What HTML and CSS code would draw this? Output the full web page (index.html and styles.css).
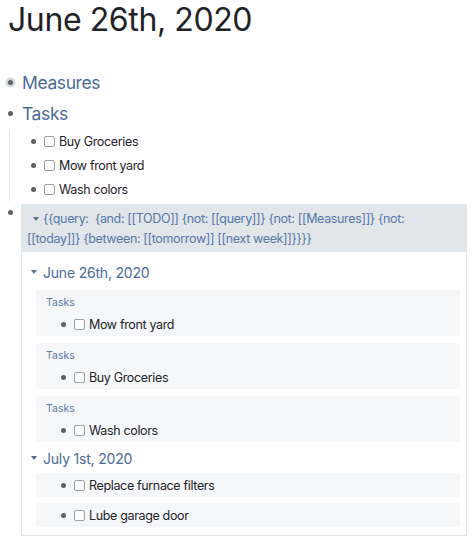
FILE: index.html
```html
<!DOCTYPE html>
<html>
<head>
<meta charset="utf-8">
<link rel="stylesheet" href="styles.css">
</head>
<body>
<h1 class="title">June 26th, 2020</h1>

<div class="block">
  <div class="row top">
    <span class="bcol"><span class="bullet collapsed"></span></span>
    <span class="link big">Measures</span>
  </div>
</div>

<div class="block">
  <div class="row top">
    <span class="bcol"><span class="bullet"></span></span>
    <span class="link big">Tasks</span>
  </div>
  <div class="children">
    <div class="row child"><span class="bcol small"><span class="bullet"></span></span><span class="cb"></span><span class="txt">Buy Groceries</span></div>
    <div class="row child"><span class="bcol small"><span class="bullet"></span></span><span class="cb"></span><span class="txt">Mow front yard</span></div>
    <div class="row child"><span class="bcol small"><span class="bullet"></span></span><span class="cb"></span><span class="txt">Wash colors</span></div>
  </div>
</div>

<div class="qblock">
  <span class="bcol qb"><span class="bullet"></span></span>
  <div class="query">
    <div class="qhead"><span class="tri"></span>{{query:&nbsp; {and: [[TODO]] {not: [[query]]} {not: [[Measures]]} {not: [[today]]} {between: [[tomorrow]] [[next week]]}}}}</div>
    <div class="results">
      <div class="group-head"><span class="tri"></span><span class="link mid">June 26th, 2020</span></div>
      <div class="card">
        <div class="label">Tasks</div>
        <div class="row crow"><span class="bcol small"><span class="bullet"></span></span><span class="cb"></span><span class="txt">Mow front yard</span></div>
      </div>
      <div class="card">
        <div class="label">Tasks</div>
        <div class="row crow"><span class="bcol small"><span class="bullet"></span></span><span class="cb"></span><span class="txt">Buy Groceries</span></div>
      </div>
      <div class="card">
        <div class="label">Tasks</div>
        <div class="row crow"><span class="bcol small"><span class="bullet"></span></span><span class="cb"></span><span class="txt">Wash colors</span></div>
      </div>
      <div class="group-head second"><span class="tri"></span><span class="link mid">July 1st, 2020</span></div>
      <div class="card single">
        <div class="row crow"><span class="bcol small"><span class="bullet"></span></span><span class="cb"></span><span class="txt">Replace furnace filters</span></div>
      </div>
      <div class="card single">
        <div class="row crow"><span class="bcol small"><span class="bullet"></span></span><span class="cb"></span><span class="txt">Lube garage door</span></div>
      </div>
    </div>
  </div>
</div>
</body>
</html>
```

FILE: styles.css
```css
html, body {
  margin: 0;
  padding: 0;
  background: #ffffff;
}
body {
  font-family: Inter, "Noto Sans", sans-serif;
  color: #202b33;
  width: 474px;
  overflow: hidden;
}
.title {
  margin: 0 0 27px 8px;
  font-size: 32px;
  line-height: 40px;
  font-weight: 400;
  color: #1f2328;
  letter-spacing: -0.4px;
}
.row {
  display: flex;
  align-items: center;
}
.bcol {
  display: flex;
  align-items: center;
  justify-content: center;
  width: 12px;
  flex: none;
}
.bcol.small {
  width: 10px;
}
.bullet {
  width: 5px;
  height: 5px;
  border-radius: 50%;
  background: #5c6166;
}
.bullet.collapsed {
  box-shadow: 0 0 0 2.5px #d3d9df;
}
.row.top {
  height: 31px;
  padding-left: 4px;
}
.link {
  color: #4a6a99;
}
.big {
  font-size: 17.5px;
  letter-spacing: -0.4px;
  margin-left: 6px;
}
.mid {
  font-size: 14px;
  letter-spacing: -0.2px;
}
.children {
  margin-left: 9px;
  border-left: 1px solid #e1e4e8;
  padding-left: 18px;
  padding-bottom: 0;
}
.row.child {
  height: 24px;
  font-size: 12.5px;
  letter-spacing: -0.35px;
}
.cb {
  width: 9px;
  height: 9px;
  border: 1px solid #9aa0a6;
  border-radius: 2px;
  margin-left: 6px;
  margin-right: 4px;
  flex: none;
  background: #fff;
}
.txt {
  color: #1f2328;
}
.qblock {
  display: flex;
  align-items: flex-start;
  margin-top: 3px;
  padding-left: 4px;
}
.bcol.qb {
  height: 16px;
  margin-right: 5px;
}
.query {
  width: 446px;
}
.qhead {
  background: #e1e6eb;
  color: #5677a8;
  font-size: 12.5px;
  letter-spacing: -0.35px;
  line-height: 20px;
  padding: 5px 8px 3px 6px;
}
.tri {
  display: inline-block;
  width: 0;
  height: 0;
  border-left: 3px solid transparent;
  border-right: 3px solid transparent;
  border-top: 4px solid #5c6f86;
  margin-left: 6px;
  margin-right: 4px;
  vertical-align: middle;
  position: relative;
  top: -1px;
}
.results {
  border: 1px solid #e3e6ea;
  border-top: none;
  padding: 10px 6px 8px 14px;
}
.group-head {
  display: flex;
  align-items: center;
  height: 20px;
  margin-left: -5px;
  margin-bottom: 8px;
}
.group-head .tri {
  margin-left: 0;
  margin-right: 6px;
  top: 0;
}
.group-head.second {
  margin-top: -1px;
  margin-bottom: 5px;
}
.card {
  background: #f5f7f9;
  padding: 6px 0 1px 10px;
  margin-bottom: 7px;
  border-radius: 2px;
}
.card.single {
  padding: 1px 0 1px 10px;
  margin-bottom: 6px;
}
.card.single:last-child {
  margin-bottom: 0;
}
.label {
  font-size: 10.5px;
  line-height: 14px;
  color: #5b7ba6;
}
.row.crow {
  height: 22px;
  margin-top: 3px;
  font-size: 12.5px;
  letter-spacing: -0.35px;
  padding-left: 12px;
}
.card.single .row.crow {
  margin-top: 0;
}
```
